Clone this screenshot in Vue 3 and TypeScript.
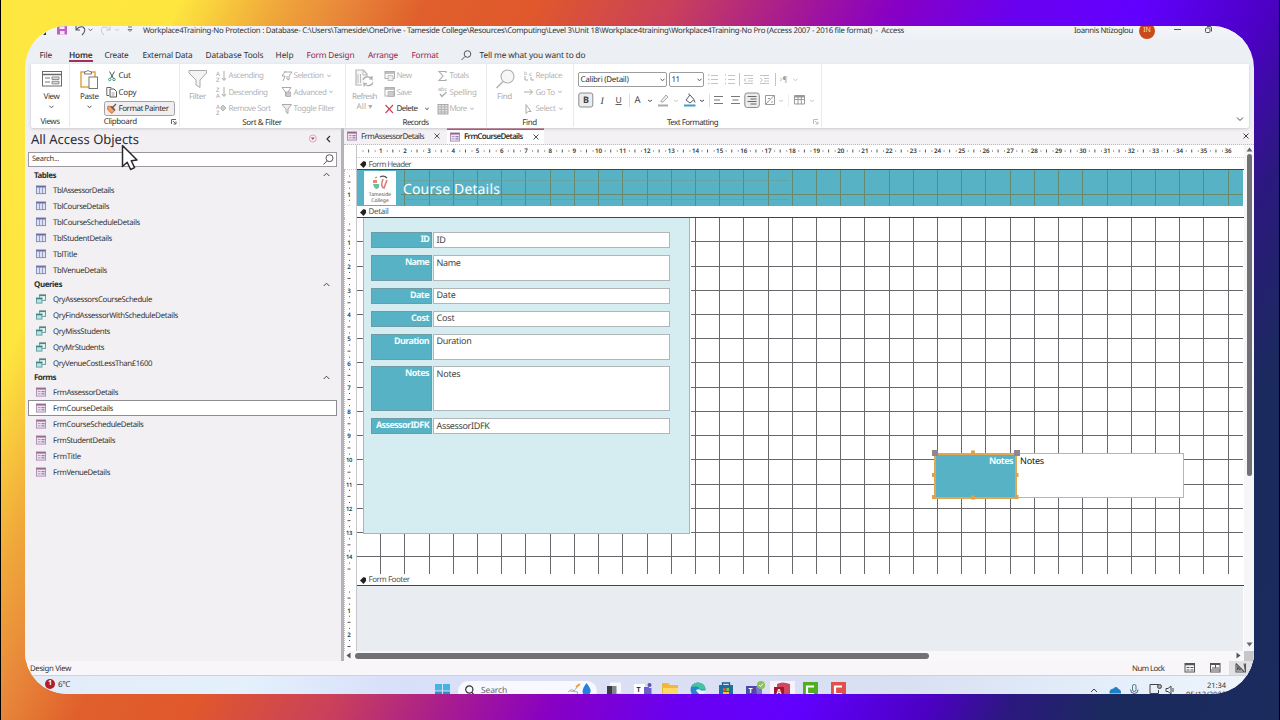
<script setup lang="ts">
interface Cmd { icon: string; text: string; w: number; on?: boolean; boxed?: boolean; caret?: boolean }
interface Group { label: string; lw: number; w: number; big: { icon: string; lines: { t: string; w: number }[]; caret?: boolean; on?: boolean }; cols: { w: number; cmds: Cmd[] }[]; launcher?: boolean }

// Tracks a text run so that it fills the given width in pixels.
const vFit = {
  mounted(el: HTMLElement, binding: { value: number }) {
    const n = (el.textContent || '').trim().length
    const natural = el.getBoundingClientRect().width
    if (n > 0) el.style.letterSpacing = ((binding.value - natural) / n).toFixed(3) + 'px'
  },
}

const icons: Record<string, string> = {
  view: '<rect x=".5" y="2.5" width="19" height="14.5" fill="#fff" stroke="#6b6b6b"/><path d="M1 5.5h18" stroke="#6b6b6b" stroke-width="1.6"/><path d="M3 9h5M3 13h5" stroke="#777"/><path d="M10 8h7v2.5h-7zM10 12.300h7v2.500h-7z" fill="#ddd" stroke="#777" stroke-width=".8"/>',
  paste: '<rect x="2" y="3" width="14" height="15" fill="#fffdf8" stroke="#e0a54a" stroke-width="1.500"/><path d="M5.500 5V3l2-.5Q9 0 10.500 2.500l2 .5v2z" fill="#fff" stroke="#777"/><rect x="10" y="8" width="8.500" height="11.500" fill="#fff" stroke="#777"/>',
  filter: '<path d="M1 1.500h17.500v2.500l-6.500 7v7.500l-4-2.500V11L1 4z" fill="#f4f4f4" stroke="#aaa"/>',
  refresh: '<path d="M12 7V5L8.500 1H1v15h6" fill="#f6f6f6" stroke="#b5b5b5" stroke-width="1.200"/><path d="M8 1v5h4M3 5v9M5.500 5v9" fill="none" stroke="#bbb"/><path d="M8 11a5 4.500 0 0 1 9-1V7m0 3h-3M18 13.500a5 4.500 0 0 1-9 1v3m0-3h3" fill="none" stroke="#aaa" stroke-width="1.200"/>',
  find: '<circle cx="12.500" cy="7.500" r="6.500" fill="#f6f6f6" stroke="#b0b0b0" stroke-width="1.100"/><path d="M8 12.500l-6.500 6.500" stroke="#b0b0b0" stroke-width="1.500"/>',
  cut: '<path d="M3.500 1.500l4 7M8.500 1.500l-4 7" stroke="#555" stroke-width="1"/><circle cx="3.700" cy="9.500" r="1.200" fill="none" stroke="#3c9a8a"/><circle cx="8" cy="9.500" r="1.200" fill="none" stroke="#3c9a8a"/>',
  copy: '<path d="M3 9.500H.8v-8h4.500" fill="none" stroke="#666"/><path d="M4 3h4l2.500 2.500V11H4z" fill="#fff" stroke="#555"/><path d="M5.500 7h3M5.500 9h3" stroke="#777" stroke-width=".7"/>',
  painter: '<path d="M2 3l5 1 2 3-3 3.500Q3 9 1.500 6z" fill="#f0a26a" stroke="#c06a3a" stroke-width=".8"/><path d="M6 5l4-4M5 3.500l4 4" stroke="#5b5b66" stroke-width="1.300"/>',
  asc: '<text x="0" y="5.500" font-size="6">A</text><text x="0" y="11.500" font-size="6">Z</text><path d="M8 1v9M6 8l2 2.500L10 8" fill="none" stroke="#aaa"/>',
  desc: '<text x="0" y="5.500" font-size="6">Z</text><text x="0" y="11.500" font-size="6">A</text><path d="M8 1v9M6 8l2 2.500L10 8" fill="none" stroke="#aaa"/>',
  rsort: '<text x="0" y="5.500" font-size="6">A</text><text x="0" y="11.500" font-size="6">Z</text><path d="M5 4l2-2 3 3-3 3-2-2z" fill="#ccc" stroke="#aaa" stroke-width=".8"/>',
  sel: '<path d="M3 2h8L8 6v4L6 9V6M4.500 1L1 6h3L2 11" fill="none" stroke="#aaa"/>',
  adv: '<path d="M1 1.500h9L7 6M1 1.500L4.500 6v4" fill="none" stroke="#aaa"/><rect x="5" y="6" width="4.500" height="4.500" fill="#ccc" stroke="#aaa" stroke-width=".8"/>',
  tog: '<path d="M1 1.500h9.500L7 6v4.500L5 9V6z" fill="#eee" stroke="#aaa"/>',
  new: '<rect x="1" y="1.500" width="9.500" height="7" fill="none" stroke="#b0b0b0"/><path d="M1 3h9.500" stroke="#aaa" stroke-width="1.500"/><path d="M4 5.500h5v5H4z" fill="#eee" stroke="#aaa" stroke-width=".7"/>',
  save: '<rect x="1" y="1.500" width="9.500" height="8.500" fill="none" stroke="#b0b0b0"/><path d="M1 3h9.500" stroke="#aaa" stroke-width="1.500"/><path d="M4 5.500h6v5H4z" fill="#ccc" stroke="#aaa" stroke-width=".7"/>',
  del: '<path d="M1.500 2l7.500 8M9 2L1.500 10" stroke="#c8405a" stroke-width="1.100"/>',
  sum: '<path d="M9 3V1.500H2L6 6l-4 4.500h7V9" fill="none" stroke="#aaa" stroke-width="1.100"/>',
  spell: '<text x="1" y="5" font-size="5.500">abc</text><path d="M3 8l2 2.500L9.500 6" fill="none" stroke="#aaa" stroke-width="1.300"/>',
  more: '<rect x="1" y="1.500" width="10" height="9.500" fill="#e2e2e2" stroke="#aaa"/><path d="M1 4h10M1 6.500h10M1 9h10M4.300 1.500V11M7.600 1.500V11" stroke="#aaa" stroke-width=".8"/>',
  repl: '<text x="1" y="5" font-size="5">b</text><text x="6" y="6" font-size="6">c</text><path d="M2 6v4h3M8 7v3h3" fill="none" stroke="#aaa"/>',
  goto: '<path d="M1 6h8.500M6.500 3l3 3-3 3" fill="none" stroke="#aaa"/>',
  select: '<path d="M3 1.500v9l2.200-2 2.800 0z" fill="#fff" stroke="#aaa"/>',
  table: '<rect x=".5" y=".5" width="10" height="8.500" fill="#dfe2f4" stroke="#8088b4"/><path d="M.5 1.500h10" stroke="#666e9e" stroke-width="1.600"/><path d="M3.800 2v7M7.200 2v7" stroke="#8a92c0"/>',
  query: '<rect x="4" y=".5" width="6.500" height="6" fill="#e8f3f2" stroke="#5a9a9a"/><path d="M3.500 1h7.500" stroke="#4e8888" stroke-width="1.600"/><rect x=".5" y="4" width="6" height="5.500" fill="#c4e2e0" stroke="#5a9a9a"/><path d="M0 4.500h7" stroke="#3f8a86" stroke-width="1.700"/>',
  form: '<rect x=".5" y=".5" width="10" height="9" fill="#f0e4f0" stroke="#a98aae"/><path d="M.5 1.500h10" stroke="#96608f" stroke-width="1.600"/><path d="M2 4.500h3M2 7h3" stroke="#a890b4"/><path d="M6 4.500h3.500M6 7h3.500" stroke="#8a82bc" stroke-width="1.400"/>',
}

const tabs = [
  { t: 'File', x: 14.5, w: 12.5 }, { t: 'Home', x: 44, w: 23.5, on: true }, { t: 'Create', x: 79.5, w: 24 },
  { t: 'External Data', x: 117.5, w: 50 }, { t: 'Database Tools', x: 180.5, w: 58 }, { t: 'Help', x: 250.5, w: 18 },
  { t: 'Form Design', x: 281.5, w: 48, red: true }, { t: 'Arrange', x: 343, w: 30, red: true }, { t: 'Format', x: 386.5, w: 27, red: true },
].map((t, i, a) => ({ ...t, gap: i ? t.x - a[i - 1].x - a[i - 1].w : t.x }))

const groups: Group[] = [
  { label: 'Views', lw: 19, w: 39, big: { icon: 'view', lines: [{ t: 'View', w: 16 }], caret: true, on: true }, cols: [] },
  { label: 'Clipboard', lw: 33, w: 109.5, launcher: true, big: { icon: 'paste', lines: [{ t: 'Paste', w: 18.5 }], caret: true, on: true },
    cols: [{ w: 73, cmds: [{ icon: 'cut', text: 'Cut', w: 12, on: true }, { icon: 'copy', text: 'Copy', w: 18, on: true }, { icon: 'painter', text: 'Format Painter', w: 50, on: true, boxed: true }] }] },
  { label: 'Sort & Filter', lw: 39.5, w: 166, big: { icon: 'filter', lines: [{ t: 'Filter', w: 17 }] },
    cols: [
      { w: 65, cmds: [{ icon: 'asc', text: 'Ascending', w: 35 }, { icon: 'desc', text: 'Descending', w: 39 }, { icon: 'rsort', text: 'Remove Sort', w: 42 }] },
      { w: 64, cmds: [{ icon: 'sel', text: 'Selection', w: 30, caret: true }, { icon: 'adv', text: 'Advanced', w: 33, caret: true }, { icon: 'tog', text: 'Toggle Filter', w: 41 }] },
    ] },
  { label: 'Records', lw: 26, w: 141, big: { icon: 'refresh', lines: [{ t: 'Refresh', w: 25 }, { t: 'All ▾', w: 16 }] },
    cols: [
      { w: 53, cmds: [{ icon: 'new', text: 'New', w: 15 }, { icon: 'save', text: 'Save', w: 15 }, { icon: 'del', text: 'Delete', w: 21, on: true, caret: true }] },
      { w: 49, cmds: [{ icon: 'sum', text: 'Totals', w: 19 }, { icon: 'spell', text: 'Spelling', w: 27 }, { icon: 'more', text: 'More', w: 17, caret: true }] },
    ] },
  { label: 'Find', lw: 14.5, w: 87, big: { icon: 'find', lines: [{ t: 'Find', w: 15 }] },
    cols: [{ w: 50, cmds: [{ icon: 'repl', text: 'Replace', w: 26.5 }, { icon: 'goto', text: 'Go To', w: 19, caret: true }, { icon: 'select', text: 'Select', w: 20, caret: true }] }] },
]

const nav = [
  { name: 'Tables', w: 22, icon: 'table', items: [['TblAssessorDetails', 61], ['TblCourseDetails', 56], ['TblCourseScheduleDetails', 87], ['TblStudentDetails', 59], ['TblTitle', 24], ['TblVenueDetails', 54]] as [string, number][] },
  { name: 'Queries', w: 28, icon: 'query', items: [['QryAssessorsCourseSchedule', 99], ['QryFindAssessorWithScheduleDetails', 125], ['QryMissStudents', 57], ['QryMrStudents', 51], ['QryVenueCostLessThan£1600', 99]] as [string, number][] },
  { name: 'Forms', w: 22, icon: 'form', items: [['FrmAssessorDetails', 65], ['FrmCourseDetails', 60], ['FrmCourseScheduleDetails', 90.5], ['FrmStudentDetails', 62], ['FrmTitle', 28], ['FrmVenueDetails', 57]] as [string, number][] },
]

const UNIT = 24.21
const range = (n: number) => Array.from({ length: n }, (_, i) => i + 1)
const hNums = range(36)
const vSections = [
  { cls: 'r-head', n: 1, h: 36 },
  { cls: 'r-detail', n: 14, h: 356 },
  { cls: 'r-foot', n: 2, h: 64 },
]

const fields = [
  { t: 'ID', y: 14, h: 16, lw: 8.5, w: 9 }, { t: 'Name', y: 37, h: 26, lw: 24, w: 24 },
  { t: 'Date', y: 69.5, h: 16, lw: 19, w: 19 }, { t: 'Cost', y: 92.5, h: 16, lw: 18, w: 18 },
  { t: 'Duration', y: 115.5, h: 26, lw: 35, w: 35 }, { t: 'Notes', y: 148, h: 45, lw: 24, w: 24 },
  { t: 'AssessorIDFK', y: 200, h: 16, lw: 53, w: 53 },
]
</script>

<template>
  <div class="stage">
    <div class="window">
      <header class="titlebar">
        <svg class="quick" width="118" height="12" viewBox="0 0 118 12" fill="none">
          <path d="M18 9l3-3v3z" fill="#333" />
          <path d="M32 0h10v8.500H32z" fill="#c25fc6" /><path d="M34.500 0h5v3h-5zM35 5h4.500v3.500H35z" fill="#f4e6f6" />
          <path d="M51 0v4h4M51 4q3-4 7-3 4 3-1 8" stroke="#555" stroke-width="1.100" /><path d="M63.500 3l2 1.500 2-1.500" stroke="#666" />
          <path d="M85 0v4h-4M85 4q-3-4-7-3-4 3 1 8" stroke="#c6c6cc" /><path d="M90 3l2 1.500 2-1.500" stroke="#ccc" />
          <path d="M103 1h4M103 3.500l2 2 2-2z" stroke="#777" />
        </svg>
        <span class="doc"><span v-fit="761">Workplace4Training-No Protection : Database- C:\Users\Tameside\OneDrive - Tameside College\Resources\Computing\Level 3\Unit 18\Workplace4training\Workplace4Training-No Pro (Access 2007 - 2016 file format)&nbsp; - &nbsp;Access</span></span>
        <span class="user"><span v-fit="59">Ioannis Ntizoglou</span></span>
        <span class="avatar">IN</span>
        <svg class="winbtns" width="42" height="11" viewBox="0 0 42 11" fill="none" stroke="#555">
          <path d="M0 3.500h7" /><rect x="31.500" y="2" width="4.500" height="4.500" rx="1" /><path d="M33 .5h3q1.500 0 1.500 1.500V5.500" />
        </svg>
      </header>

      <nav class="tabs">
        <span v-for="t in tabs" :key="t.t" class="tab" :class="{ on: t.on, red: t.red }" :style="{ marginLeft: t.gap + 'px', width: t.w + 'px' }"><span v-fit="t.w">{{ t.t }}</span></span>
        <svg class="tellicon" width="11" height="11" viewBox="0 0 11 11" fill="none" stroke="#555"><circle cx="6.500" cy="4" r="3.300" /><path d="M4 6.500L.5 10" /></svg>
        <span class="tab"><span v-fit="106">Tell me what you want to do</span></span>
      </nav>

      <section class="ribbon">
        <div v-for="g in groups" :key="g.label" class="group" :style="{ width: g.w + 'px' }">
          <div class="gbody">
            <div class="big" :class="{ on: g.big.on, clip: g.big.on }">
              <svg width="20" height="20" viewBox="0 0 20 20" fill="none" v-html="icons[g.big.icon]"></svg>
              <span v-for="l in g.big.lines" :key="l.t" class="bl"><span v-fit="l.w">{{ l.t }}</span></span>
              <svg v-if="g.big.caret" width="5" height="4" viewBox="0 0 5 4" fill="none" stroke="#555"><path d="M.5 1l2 1.500L4.500 1" /></svg>
            </div>
            <div v-for="(c, i) in g.cols" :key="i" class="col" :style="{ width: c.w + 'px' }">
              <div v-for="m in c.cmds" :key="m.text" class="cmd" :class="{ on: m.on, boxed: m.boxed }">
                <svg width="12" height="12" viewBox="0 0 12 12" fill="none" class="ci" v-html="icons[m.icon]"></svg>
                <span v-fit="m.w">{{ m.text }}</span>
                <svg v-if="m.caret" class="mcaret" width="4" height="4" viewBox="0 0 4 4" fill="none"><path d="M.3 1L2 2.500 3.700 1" /></svg>
              </div>
            </div>
          </div>
          <div class="glabel"><span class="gl"><span v-fit="g.lw">{{ g.label }}</span></span>
            <svg v-if="g.launcher" class="launch" width="6" height="6" viewBox="0 0 6 6" fill="none" stroke="#666"><path d="M.5 5V.5H5M2 2l3 3M5 2.500V5H2.500" /></svg>
          </div>
        </div>
        <div class="group text-group">
          <div class="fontrow">
            <span class="combo c1"><span v-fit="48">Calibri (Detail)</span><svg width="5" height="4" viewBox="0 0 5 4" fill="none" stroke="#555"><path d="M.5 1l2 1.500L4.500 1" /></svg></span>
            <span class="combo c2"><span v-fit="8">11</span><svg width="5" height="4" viewBox="0 0 5 4" fill="none" stroke="#555"><path d="M.5 1l2 1.500L4.500 1" /></svg></span>
            <svg width="96" height="15" viewBox="1 0 96 15" fill="none" stroke="#c4c4c4">
              <path d="M8 3.500h7M8 7.500h7M8 11.500h7M25 3.500h7M25 7.500h7M25 11.500h7M36.500 1v13M41 3.500h9M45 6.500h5M45 9h5M41 11.500h9M57 3.500h9M61 6.500h5M61 9h5M57 11.500h9M72.500 1v13" />
              <path d="M5 3h1.500M5 7.500h1.500M5 11.500h1.500M22 3h1M22 7.500h1M22 11.500h1" stroke-width="1.500" /><path d="M43.500 6L41 8l2.500 2M57 6l2.500 2L57 10M77 6l2 1.500-2 1.500M90.500 7l2 1.500 2-1.500" />
              <text x="79.500" y="10" font-size="7.500">¶</text>
            </svg>
          </div>
          <svg class="fmt" width="240" height="17" viewBox="0 0 240 17" fill="none" stroke="#777">
            <rect x=".8" y="1" width="14" height="14" rx="2" fill="#ececee" stroke="#8a8a8e" />
            <text x="5" y="11" class="fb">B</text><text x="22.500" y="11.500" class="fi">I</text><text x="37.500" y="11" class="fu">U</text>
            <path d="M51.500 2v13" stroke="#ddd" />
            <text x="56.500" y="10.500" class="fa">A</text>
            <path d="M70 8l2 1.500L74 8" stroke="#555" />
            <path d="M83 9l5-6 2 2-5 5h-2z" stroke="#aaa" fill="#eee" /><path d="M80 13.500h10" stroke="#aaa" stroke-width="2" /><path d="M96 8l2 1.500 2-1.500" stroke="#ccc" />
            <path d="M108 8l4-5 4 4.500-4 3.500zM111 3V1.500M116 8l1 2.500" stroke="#556" /><path d="M106 13.500h11.500" stroke="#3e9fc4" stroke-width="2.200" /><path d="M122 8l2 1.500 2-1.500" stroke="#444" />
            <path d="M131.500 2v13" stroke="#ddd" />
            <path d="M136 4.500h9M136 8h6M136 11.500h9M153 4.500h9M154.500 8h6M153 11.500h9" />
            <rect x="166.800" y="1" width="14.500" height="14.500" rx="2.500" fill="#ececee" stroke="#8a8a8e" /><path d="M169.500 4.500h9M172.500 7h6M169.500 9.500h9M172.500 12h6" stroke="#666" />
            <path d="M187.500 3.500h9v9h-9zM188 12l8-8.500M190 6.500h2M193 10h2" stroke="#999" /><path d="M201 8l2 1.500 2-1.500" stroke="#ccc" />
            <path d="M210.500 2v13" stroke="#eee" /><path d="M216.500 3.500h10v8.500h-10zM216.500 7.500h10M220 3.500V12M223.300 3.500V12" stroke="#999" /><path d="M216.500 4.500h10" stroke="#999" stroke-width="2" /><path d="M232 8l2 1.500 2-1.500" stroke="#ccc" />
          </svg>
          <div class="glabel"><span class="gl tf"><span v-fit="51">Text Formatting</span></span>
            <svg class="launch" width="6" height="6" viewBox="0 0 6 6" fill="none" stroke="#bbb"><path d="M.5 5V.5H5M2 2l3 3M5 2.500V5H2.500" /></svg>
          </div>
        </div>
        <svg class="collapse" width="8" height="6" viewBox="0 0 8 6" fill="none" stroke="#444"><path d="M1 1.500l3 3 3-3" /></svg>
      </section>

      <main class="work">
        <aside class="pane">
          <div class="ptitle"><span v-fit="108">All Access Objects</span>
            <svg width="24" height="10" viewBox="0 0 24 10" fill="none"><circle cx="3.800" cy="4.500" r="3.500" stroke="#dfa4b6" fill="#faeef2" /><path d="M1.800 3.500h4l-2 2.500z" fill="#b84a68" /><path d="M21 2l-3 3 3 3" stroke="#333" stroke-width="1.200" /></svg>
          </div>
          <div class="search"><span v-fit="27">Search...</span><svg width="11" height="11" viewBox="0 0 11 11" fill="none" stroke="#555"><circle cx="6.500" cy="4.200" r="3.500" /><path d="M4 6.800L.5 10.500" /></svg></div>
          <div v-for="s in nav" :key="s.name" class="nsec">
            <div class="nhead"><span v-fit="s.w">{{ s.name }}</span><svg width="7" height="5" viewBox="0 0 7 5" fill="none" stroke="#444"><path d="M.7 4l2.800-2.800L6.300 4" /></svg></div>
            <div v-for="it in s.items" :key="it[0]" class="nitem" :class="{ sel: it[0] === 'FrmCourseDetails' }">
              <svg width="10" height="10" viewBox="0 0 11 10" fill="none" v-html="icons[s.icon]"></svg><span v-fit="it[1]">{{ it[0] }}</span>
            </div>
          </div>
        </aside>
        <div class="splitter"></div>

        <section class="doc-area">
          <div class="dtabs">
            <span class="dtab"><svg width="10" height="10" viewBox="0 0 11 10" v-html="icons.form"></svg><span v-fit="63">FrmAssessorDetails</span><svg class="x" width="6" height="6" viewBox="0 0 6 6" stroke="#555"><path d="M.5.5l5 5M5.500.5l-5 5" /></svg></span>
            <span class="dtab act"><svg width="10" height="10" viewBox="0 0 11 10" v-html="icons.form"></svg><span v-fit="58.5">FrmCourseDetails</span><svg class="x" width="6" height="6" viewBox="0 0 6 6" stroke="#555"><path d="M.5.5l5 5M5.500.5l-5 5" /></svg></span>
            <svg class="closeall" width="6" height="6" viewBox="0 0 6 6" stroke="#444"><path d="M.5.5l5 5M5.500.5l-5 5" /></svg>
          </div>
          <div class="design">
            <div class="vrule">
              <div class="corner"></div>
              <div v-for="s in vSections" :key="s.cls" class="vsec" :class="s.cls">
                <svg width="13" :height="s.h" class="rsvg">
                  <path v-for="n in range(s.n + 1)" :key="n" :d="`M4 ${(n - .75) * UNIT}h1M2.500 ${(n - .5) * UNIT}h3M4 ${(n - .25) * UNIT}h1`" />
                  <text v-for="n in range(s.n)" :key="'t' + n" x="4" :y="n * UNIT + 2.3" text-anchor="middle" :class="{ two: n > 9 }">{{ n }}</text>
                </svg>
              </div>
            </div>
            <div class="mid">
              <div class="hrule">
                <svg width="887" height="12" class="rsvg">
                  <g v-for="n in hNums" :key="n">
                    <path :d="`M${(n - .75) * UNIT - .5} 6h1M${(n - .5) * UNIT - .5} 4.500v3M${(n - .25) * UNIT - .5} 6h1`" />
                    <text :x="n * UNIT - .5" y="8.2" text-anchor="middle">{{ n }}</text>
                  </g>
                </svg>
              </div>
              <div class="sbar b1"><svg width="6" height="7" viewBox="0 0 6 7"><path d="M0 3.500L3.500 0 6 1v3L3.500 7z" fill="#222" /></svg><span v-fit="42.5">Form Header</span></div>
              <div class="fheader">
                <svg width="886" height="36" class="grid" fill="none">
                  <path v-for="n in hNums" :key="n" :d="`M${Math.floor(n * UNIT - .5) + .5} 0v36`" stroke="#638a70" />
                  <path d="M44 24.500h842" stroke="#6a8a6c" /><path d="M44 10.500h388M44 29.500h388" stroke="#6e9c94" stroke-width=".7" />
                </svg>
                <div class="logo">
                  <svg width="20" height="18" viewBox="0 0 20 18" fill="none"><path d="M3 5h4v3H3z" fill="#e08a70" /><path d="M3 9q1 5 4 5 3-1 2-5z" fill="#6cc0a0" /><path d="M10 2q4-2 7 1" stroke="#555" stroke-width="1.300" /><path d="M13 4q-3 8 1 9l3-8" stroke="#d8807a" stroke-width="1.600" /><path d="M5 3l2-1" stroke="#888" /></svg>
                  <span>Tameside</span><span>College</span>
                </div>
                <div class="ftitle"><span v-fit="97">Course Details</span></div>
              </div>
              <div class="sbar b2"><svg width="6" height="7" viewBox="0 0 6 7"><path d="M0 3.500L3.500 0 6 1v3L3.500 7z" fill="#222" /></svg><span v-fit="20">Detail</span></div>
              <div class="fdetail">
                <svg width="886" height="356" class="grid" fill="none" stroke="#68686c">
                  <path v-for="n in hNums" :key="n" :d="`M${Math.floor(n * UNIT - .5) + .5} 0v356`" />
                  <path v-for="n in 14" :key="'h' + n" :d="`M0 ${Math.floor(n * UNIT - .3) + .5}h886`" />
                </svg>
                <div class="backdrop"></div>
                <template v-for="f in fields" :key="f.t">
                  <div class="flabel" :style="{ top: f.y + 'px', height: f.h + 'px' }"><span v-fit="f.lw">{{ f.t }}</span></div>
                  <div class="fbox" :style="{ top: f.y + 'px', height: f.h + 'px' }"><span v-fit="f.w">{{ f.t }}</span></div>
                </template>
                <div class="flabel moving"><span v-fit="24">Notes</span></div>
                <div class="fbox moved"><span v-fit="24">Notes</span></div>
                <svg class="handles" width="90" height="52" viewBox="0 0 90 52"><g fill="#8e8690"><rect x="1" y="1" width="6" height="6" /><rect x="83" y="1" width="6" height="6" /></g><g fill="#e2a04c"><rect x="40" y="1.500" width="4" height="4" /><rect x="1" y="24" width="3.500" height="4" /><rect x="84" y="24" width="3.500" height="4" /><rect x="1" y="46" width="3.500" height="4" /><rect x="40" y="46.500" width="4" height="4" /><rect x="84" y="46" width="3.500" height="4" /></g></svg>
              </div>
              <div class="sbar b3"><svg width="6" height="7" viewBox="0 0 6 7"><path d="M0 3.500L3.500 0 6 1v3L3.500 7z" fill="#222" /></svg><span v-fit="41">Form Footer</span></div>
              <div class="ffooter"></div>
            </div>
            <div class="vscroll"><svg width="7" height="5" viewBox="0 0 7 5"><path d="M3.500.5L6.500 4.500H.5z" fill="#666" /></svg><div class="vthumb"></div><svg width="7" height="5" viewBox="0 0 7 5"><path d="M3.500 4.500L6.500.5H.5z" fill="#666" /></svg></div>
          </div>
          <div class="hscroll"><svg width="5" height="7" viewBox="0 0 5 7"><path d="M.5 3.500l4-3v6z" fill="#555" /></svg><div class="hthumb"></div><svg class="ra" width="5" height="7" viewBox="0 0 5 7"><path d="M4.500 3.500l-4-3v6z" fill="#555" /></svg><div class="scorner"></div></div>
        </section>
      </main>

      <footer class="status">
        <span class="dv"><span v-fit="41">Design View</span></span>
        <span class="nl"><span v-fit="32.5">Num Lock</span></span>
        <svg width="70" height="14" viewBox="0 0 70 14" fill="none" stroke="#555">
          <rect x="46" y="0" width="24" height="14" fill="#e2e0e4" stroke="none" />
          <rect x="2" y="2.500" width="9.500" height="8.500" /><path d="M2 3.500h9.500" stroke-width="1.500" /><path d="M3.500 6.500h3M3.500 9h3M7.500 6.500h3M7.500 9h3" />
          <rect x="27.500" y="2.500" width="9.500" height="8.500" /><path d="M27.500 3.500h9.500M29 7h3M33 7h3M27.500 9h9.500M32.500 2.500v5" />
          <path d="M53 2.500v8.500h9.500V2.500M53 2.500l8 8M54.500 9v-3l3 3zM61 2.500l1.500 8" stroke-width="1.100" />
        </svg>
      </footer>

      <div class="taskbar">
        <div class="weather"><span class="badge">1</span><span class="temp"><span v-fit="12">6°C</span></span></div>
        <svg class="start" width="15" height="15" viewBox="0 0 15 15"><path d="M0 1h7v6.500H0zM8 1h7v6.500H8z" fill="#45b4e0" /><path d="M0 8.500h7V15H0zM8 8.500h7V15H8z" fill="#2a90d0" /></svg>
        <div class="tsearch">
          <svg width="10" height="11" viewBox="0 0 10 11" fill="none" stroke="#333" stroke-width="1.200"><circle cx="4.300" cy="4.500" r="3.600" /><path d="M7 7.500l2.500 3" /></svg>
          <span class="ts"><span v-fit="26">Search</span></span>
          <svg class="art" width="26" height="14" viewBox="0 0 26 14" fill="none"><path d="M1 9q4-4 6-1l4-5" stroke="#aaa" /><path d="M9 4l4-3" stroke="#e8a040" stroke-width="2" /><path d="M3 8l8 1-2 5" stroke="#b8a8a0" /><path d="M19.500 0q5 6 4 9-1.500 4-4 4-3 0-4-4 0-4 4-9z" fill="#2383dc" /></svg>
        </div>
        <svg class="apps" width="246" height="16" viewBox="0 0 246 16" fill="none">
          <path d="M4 1.500h11V12H4z" fill="#f8f8fa" /><path d="M1 5h9v11H1z" fill="#3a3c42" /><path d="M6 5h5v11H6z" fill="#9fa4ac" opacity=".7" />
          <path d="M28 3h11v12H28z" fill="#fff" /><text x="30.500" y="10.500" class="tt">T</text><circle cx="43.500" cy="4" r="2" fill="#5a50b8" /><path d="M38 6h5v8h-5zM41 7h4.500v8H41z" fill="#6a60c8" />
          <path d="M56 2h6l2 2h8v10H56z" fill="#f3b73c" /><path d="M57 7h15v8H57z" fill="#ffd968" />
          <path d="M84.500 9q0-7 7.500-7.500 7 .5 7.500 7 0 5-7 7.500-7.500 0-8-7z" fill="#2688cc" /><path d="M85.500 6q2-4.500 6.500-4.500 7 .5 7.500 7h-6q0-4-8-2.500z" fill="#45c4a0" /><path d="M90 9q3-1.500 5 .5l5 0-2 4q-6 1-8-4.500z" fill="#e4f4fa" />
          <path d="M113 4h14v12h-14z" fill="#1c6fa6" /><path d="M116.500 4V2h7v2" stroke="#1c5c8c" stroke-width="1.300" /><path d="M117 7h2.500v3H117z" fill="#e65a3c" /><path d="M120.500 7h2.500v3h-2.500z" fill="#88c840" /><path d="M117 11h6v3h-6z" fill="#f0c840" />
          <path d="M140 5h11v11h-11z" fill="#5048a8" /><text x="142.500" y="12" class="tt w">T</text><path d="M150 6h6v10h-5z" fill="#7c74d4" /><circle cx="155" cy="4" r="4" fill="#86c456" /><path d="M153 4l1.500 1.500L157 2.500" stroke="#fff" />
          <rect x="164" y="-2" width="25" height="20" rx="3" fill="#f6f4fa" /><path d="M171 3q5-3 13 0v13h-13z" fill="#d04860" /><path d="M168 6h10v10h-10z" fill="#9c1a34" /><text x="170.500" y="12.500" class="tt w">A</text>
          <path d="M197 1h15v15h-15z" fill="#50ae20" /><path d="M208 5.500h-7V13h7" stroke="#fff" stroke-width="2.200" />
          <path d="M225 1h15v15h-15z" fill="#e2504c" /><path d="M236 5.500h-7V13h7" stroke="#fff" stroke-width="2.200" />
        </svg>
        <svg class="tray" width="92" height="14" viewBox="-1.500 0 92 14" fill="none" stroke="#444">
          <path d="M1.500 11l3-3 3 3" /><path d="M20 11.500q0-3.500 4-4 3-3 5 .5 2.500.5 2.500 3.500v1H20z" fill="#1d7fc6" stroke="none" />
          <rect x="43" y="3.500" width="3.500" height="7" rx="1.700" stroke="#4a7890" /><path d="M41 8.500q0 4 3.800 4t3.700-4" stroke="#567" />
          <path d="M69 5v-1.500h-8.500v9H69V9" /><circle cx="70" cy="5.500" r="2" fill="#aaa" /><path d="M76.500 7.500h2l3-2.500v8l-3-2.500h-2zM83.500 7v4" />
        </svg>
        <div class="clock"><span v-fit="19">21:34</span><span v-fit="40">05/12/2023</span></div>
      </div>

    </div>
    <svg class="cursor" width="18" height="28" viewBox="0 0 18 28"><path d="M1.500 1.500v21l4.700-4.200 3.400 7.200 4-1.900-3.300-6.900 5.700-.7z" fill="#fff" stroke="#2a2a2e" stroke-width="1.500" stroke-linejoin="round" /></svg>
  </div>
</template>

<style>
html, body { margin: 0; overflow: hidden; }
</style>

<style scoped>
.stage { position: relative; box-sizing: border-box; width: 1280px; height: 720px; padding: 26px 25px 26px 24px; border-left: 1px solid #000; border-right: 1px solid #000; overflow: hidden; background: linear-gradient(116deg, #fee840 0%, #fee63f 11%, #f0a83a 17%, #e8893a 21%, #e0602c 26%, #e0582c 33%, #c9405c 41.5%, #a81c90 48.5%, #8800c4 55%, #6a00f0 62.5%, #6200ff 70%, #4c00c4 78%, #2c1880 83%, #1b2a5e 89%, #1b2b5c 100%); font-family: "Noto Sans", "Open Sans", sans-serif; font-size: 8px; color: #333; text-rendering: geometricPrecision; }
.stage span { white-space: nowrap; display: inline-block; }
.stage svg { display: block; flex: none; }
.window { width: 1229px; height: 668px; border-radius: 42px; overflow: hidden; background: #eceff4; display: flex; flex-direction: column; }
.titlebar { height: 17px; flex: none; display: flex; align-items: flex-start; line-height: 10px; font-size: 7.8px; background: linear-gradient(#f4f5f9, #eceff4); }
.doc { width: 931px; }
.user { width: 65px; }
.avatar { width: 16px; height: 16px; border-radius: 8px; margin: -3px 19px 0 0; background: #c94a1c; color: #f8d8c8; font-size: 7px; line-height: 16px; text-align: center; }
.winbtns { margin-left: -.5px; }
.tabs { height: 21px; flex: none; display: flex; align-items: flex-start; font-size: 8.3px; }
.tab { height: 18px; line-height: 25px; box-sizing: border-box; }
.tab.on { border-bottom: 2px solid #a03058; font-weight: 600; height: 19px; }
.tab.red { color: #96284e; }
.tellicon { margin: 7px 8px 0 22px; }
.ribbon { height: 64px; flex: none; width: 1218px; margin-left: 6px; background: #fff; display: flex; box-shadow: 0 1px 3px #c8c8cc; position: relative; z-index: 1; border-radius: 0 0 2px 2px; }
.group { box-sizing: border-box; border-right: 1px solid #e9e9eb; display: flex; flex-direction: column; flex: none; height: 63px; }
.gbody { display: flex; height: 52.5px; padding-top: 3.5px; box-sizing: border-box; }
.big { flex: 1; display: flex; flex-direction: column; align-items: center; padding-top: 1.5px; color: #aaa; min-width: 0; }
.big.on { color: #333; }
.big.clip { padding-left: 3px; }
.bl { line-height: 10px; height: 10px; margin-top: 2.5px; }
.bl + .bl { margin-top: 0; }
.bl + svg { margin-top: 3px; }
.cmd { height: 16.5px; display: flex; align-items: center; gap: 1px; color: #b4b4b6; box-sizing: border-box; line-height: 11px; }
.cmd.on { color: #333; }
.cmd.boxed { width: 71px; height: 15px; border: 1px solid #a4a0a6; border-radius: 2.5px; background: #f0eef1; margin: .5px 0 0 -2px; padding-left: 1px; }
.ci { fill: none; }
.ci :deep(text) { fill: #a4a4a6; }
.mcaret { margin-left: 2px; stroke: #aaa; }
.cmd.on .mcaret { margin-left: 6px; stroke: #444; }
.glabel { display: flex; height: 11px; line-height: 11px; align-items: center; }
.gl { flex: 1; text-align: center; }
.tf { padding-right: 5px; }
.launch { margin-right: 2px; }
.text-group { width: 248px; padding-left: 4px; }
.fontrow { display: flex; height: 15px; margin-top: 8px; align-items: center; }
.combo { box-sizing: border-box; height: 15px; border: 1px solid #9c9ca0; border-radius: 2px; display: inline-flex !important; justify-content: space-between; align-items: center; padding: 0 1px 0 2px; line-height: 13px; }
.c1 { width: 89px; margin-right: 2px; }
.c2 { width: 35px; }
.fontrow text { fill: #999; stroke: none; }
.fmt { margin: 5px 0 7.5px; }
.fmt text { stroke: none; fill: #444; font-size: 9px; }
.fmt .fb { font-weight: 700; }
.fmt .fi { font-style: italic; font-family: "Liberation Serif", serif; font-size: 10px; }
.fmt .fu { text-decoration: underline; font-size: 8.5px; }
.fmt .fa { font-size: 9.5px; }
.collapse { margin: 52px 5px 0 auto; }
.work { display: flex; height: 533px; flex: none; background: #f3f1f4; }
.pane { width: 316px; flex: none; background: #f2f0f3; box-sizing: border-box; }
.ptitle { height: 23.5px; padding: 0 8px 0 6px; display: flex; justify-content: space-between; align-items: center; font-size: 13px; line-height: 22px; color: #2c2c30; }
.ptitle span { margin-top: -1px; }
.ptitle svg { margin-top: -2px; }
.search { box-sizing: border-box; margin-left: 3px; width: 309px; height: 15px; background: #fff; border: 1px solid #9c9aa0; padding: 0 2px 0 3px; display: flex; justify-content: space-between; align-items: center; margin-bottom: 2px; font-size: 7.5px; }
.nhead { height: 13px; display: flex; justify-content: space-between; align-items: center; padding: 0 11px 0 9px; font-weight: 700; line-height: 13px; }
.search + .nsec .nhead { height: 13.5px; }
.nhead svg { margin-top: -1px; }
.nitem { box-sizing: border-box; height: 16px; width: 309px; margin-left: 3px; display: flex; align-items: center; gap: 7px; padding-left: 8px; line-height: 14px; font-size: 7.8px; border: 0 solid #8e8c92; }
.nitem span { padding-top: 1px; }
.nitem.sel { background: #fff; border-width: 1px; padding-left: 7px; }
.splitter { width: 2.5px; flex: none; background: #b6b2ba; }
.doc-area { flex: 1; min-width: 0; display: flex; flex-direction: column; background: #f3f1f4; }
.dtabs { height: 16px; flex: none; display: flex; line-height: 12px; }
.dtab { box-sizing: border-box; display: inline-flex !important; align-items: center; height: 16px; width: 103px; padding-left: 3px; gap: 4.5px; }
.dtab > span { padding-top: 1.5px; }
.dtab.act { width: 97px; background: #fff; border-top: 2px solid #9c1c46; font-weight: 600; padding-left: 3px; height: 16px; }
.dtab.act > span { padding-top: 0; }
.dtab .x { margin-left: 5.5px; }
.closeall { margin: 5px 5px 0 auto; }
.design { display: flex; height: 507px; flex: none; border-top: 1px dotted #bbb; box-sizing: border-box; }
.vrule { width: 13.5px; flex: none; background: #fff; border-right: 1px solid #c8c8cc; box-sizing: border-box; }
.corner { height: 25px; border-bottom: 1px dotted #ccc; box-sizing: border-box; }
.vsec { border-left: 1px dotted #bbb; overflow: hidden; box-sizing: border-box; }
.r-head { height: 48px; }
.r-detail { height: 367.5px; }
.r-foot { height: 65px; }
.rsvg { font-size: 6.2px; font-weight: 600; }
.rsvg path { stroke: #555; fill: none; }
.rsvg text { fill: #333; }
.rsvg .two { font-size: 5.8px; letter-spacing: -.4px; }
.mid { width: 887px; flex: none; display: flex; flex-direction: column; background: #fff; }
.hrule { height: 12.5px; border-bottom: 1px dotted #ccc; box-sizing: border-box; }
.sbar { display: flex; align-items: center; gap: 2.5px; padding: 1.5px 0 0 3px; box-sizing: border-box; border-bottom: 1px solid #444; color: #555; background: #fff; flex: none; line-height: 10px; }
.b1 { height: 12.5px; padding-top: 3px; }
.b2 { height: 12px; }
.b3 { height: 11.5px; }
.fheader { position: relative; height: 36px; flex: none; background: #57b2c5; width: 886px; }
.grid { position: absolute; left: 0; top: 0; }
.logo { position: absolute; left: 7px; top: 1px; width: 32px; height: 34px; background: #fff; display: flex; flex-direction: column; align-items: center; font-size: 5px; line-height: 5.5px; color: #444; }
.logo svg { margin: 4px 0 0; }
.ftitle { position: absolute; left: 46px; top: 9px; font-size: 14px; line-height: 22px; color: #fff; }
.fdetail { position: relative; height: 356px; flex: none; width: 886px; }
.backdrop { position: absolute; left: 6px; top: 0; width: 327px; height: 316px; box-sizing: border-box; background: #d5ecf0; border: 1px solid #a8b6ba; border-top: 0; box-shadow: 1px 0 #fff; }
.flabel, .fbox { position: absolute; box-sizing: border-box; font-size: 9px; line-height: 12px; }
.flabel { left: 14px; width: 61px; background: #57b2c5; border: 1px solid #6f9ba4; color: #f2fbfd; font-weight: 700; text-align: right; padding-right: 2px; }
.fbox { left: 76px; width: 237px; background: #fff; border: 1px solid #b2b6b8; padding-left: 2.5px; color: #444; padding-top: .5px; }
.flabel.moving { left: 577px; width: 83px; top: 235px; height: 46px; border: 2px solid #e3a650; padding-right: 2px; line-height: 11px; }
.fbox.moved { left: 660px; width: 167px; top: 235px; height: 45px; color: #111; border-left: 0; padding-left: 3px; }
.handles { position: absolute; left: 574px; top: 231px; }
.ffooter { flex: 1; background: #e9edf1; width: 886px; }
.vscroll { flex: 1; display: flex; flex-direction: column; align-items: center; justify-content: space-between; padding: 2px 0 4px; box-sizing: border-box; background: #f6f5f8; }
.vthumb { width: 5px; height: 322px; border-radius: 3px; background: #727276; margin: 2px 0 auto; }
.hscroll { height: 10px; flex: none; display: flex; align-items: center; background: #f8f7f9; padding-left: 2px; box-sizing: border-box; padding-bottom: 1px; }
.hthumb { width: 574px; height: 6px; border-radius: 3px; background: #717175; margin-left: 4px; }
.ra { margin: 0 3px 0 auto; }
.scorner { width: 10px; height: 10px; background: #c6c6ca; }
.status { height: 15px; box-sizing: border-box; flex: none; display: flex; align-items: center; background: #f8f6f9; line-height: 12px; border-bottom: 1px solid #cfd0d8; font-size: 7.8px; }
.status > span { padding-top: 1.5px; }
.dv { width: 1102px; padding-left: 5px; }
.nl { width: 51px; }
.taskbar { height: 18px; flex: none; display: flex; align-items: flex-start; background: linear-gradient(90deg, #e2ecf8, #e4f0fc 18%, #d8e0fa 30%, #dcdff5 42%, #d9e0f2 72%, #e4eefa 88%, #eef4fb); overflow: hidden; }
.weather { width: 410px; display: flex; flex: none; }
.badge { width: 10px; height: 10px; margin: 3px 3px 0 20px; border-radius: 5px; background: #b01c30; color: #fff; font-size: 7px; line-height: 10px; text-align: center; font-weight: 700; }
.temp { line-height: 18px; }
.start { margin-top: 7px; }
.tsearch { width: 139px; height: 20px; flex: none; margin: 5px 9px 0 8px; border-radius: 10px; background: #f7f9fe; display: flex; box-sizing: border-box; padding: 4px 0 0 7px; }
.ts { margin: 0 0 0 6px; line-height: 12px; font-size: 8.5px; color: #666; }
.art { margin: -2px 4px 0 auto; }
.apps { margin-top: 5px; }
.apps .tt { font-size: 7px; font-weight: 700; fill: #333; }
.apps .w { fill: #fff; }
.tray { margin: 5px 0 0 236px; }
.clock { display: flex; flex-direction: column; align-items: flex-end; width: 46px; line-height: 11px; margin: 5px 0 0 0; font-size: 7.5px; }
.clock span + span { line-height: 7px; }
.cursor { position: absolute; left: 120px; top: 144px; z-index: 3; }
</style>
